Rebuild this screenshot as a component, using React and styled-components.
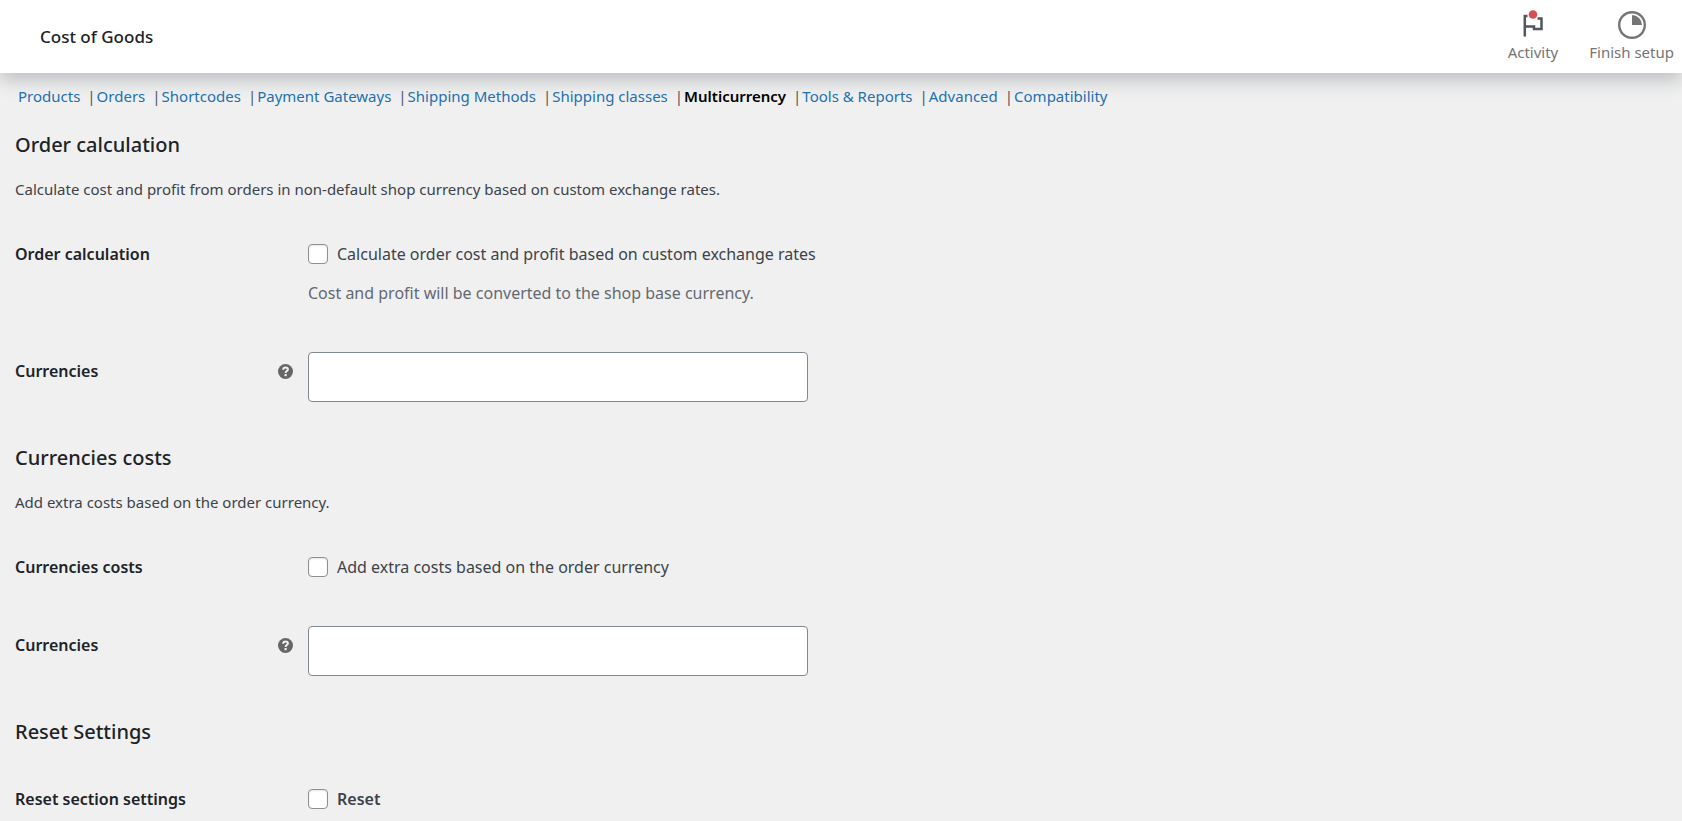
import React, { useState } from "react";
import styled, { createGlobalStyle } from "styled-components";

const GlobalStyle = createGlobalStyle`
  * {
    box-sizing: border-box;
  }

  body {
    margin: 0;
    background-color: #f0f0f0;
    color: #3c434a;
    font-family: "Noto Sans", "Open Sans", sans-serif;
    font-size: 15px;
    line-height: 24px;
  }
`;

const Header = styled.header`
  position: relative;
  display: flex;
  align-items: center;
  justify-content: space-between;
  height: 73px;
  padding: 0 8px 0 40px;
  background-color: #fff;
  box-shadow: 0 8px 16px 0 rgba(85, 93, 102, 0.3);
`;

const PageTitle = styled.h1`
  margin: 0;
  color: #1d2327;
  font-size: 17px;
  font-weight: 500;
`;

const Actions = styled.div`
  display: flex;
  gap: 31px;
`;

const ActionButton = styled.button`
  display: flex;
  flex-direction: column;
  align-items: center;
  padding: 0;
  border: none;
  background: none;
  color: #757575;
  font-family: inherit;
  font-size: 15px;
  line-height: 24px;
  cursor: pointer;

  svg {
    display: block;
  }
`;

const Nav = styled.nav`
  padding: 11px 3px 0;
`;

const NavList = styled.ul`
  display: flex;
  flex-wrap: wrap;
  margin: 0;
  padding: 0;
  list-style: none;
`;

const NavItem = styled.li`
  &:not(:last-child)::after {
    content: "|";
    padding: 0 1px 0 7px;
    color: #50575e;
  }
`;

const NavLink = styled.a`
  color: ${(props) => (props.$current ? "#000" : "#2271b1")};
  font-weight: ${(props) => (props.$current ? 600 : 400)};
  text-decoration: none;
`;

const Page = styled.main`
  padding: 0 15px 10px;
`;

const Section = styled.section`
  margin-top: ${(props) => (props.$first ? "23px" : "42px")};
`;

const SectionTitle = styled.h2`
  margin: 0;
  color: #1d2327;
  font-size: 20px;
  font-weight: 500;
  line-height: 28px;
`;

const SectionText = styled.p`
  margin: 18px 0 0;
`;

const Rows = styled.div`
  display: flex;
  flex-direction: column;
  gap: 47px;
  margin-top: 41px;
`;

const Row = styled.div`
  display: grid;
  grid-template-columns: 278px minmax(0, 1fr);
  column-gap: 15px;
  align-items: start;
`;

const RowHead = styled.div`
  display: flex;
  align-items: center;
  justify-content: space-between;
  padding-top: ${(props) => (props.$field ? "7px" : "0")};
`;

const RowLabel = styled.label`
  color: #1d2327;
  font-size: 16px;
  font-weight: 600;
`;

const HelpButton = styled.button`
  padding: 0;
  border: none;
  background: none;
  cursor: help;

  svg {
    display: block;
  }
`;

const CheckLabel = styled.label`
  display: flex;
  align-items: center;
  gap: 9px;
  width: fit-content;
  font-size: 16px;
  font-weight: ${(props) => (props.$strong ? 600 : 400)};
`;

const Checkbox = styled.input`
  appearance: none;
  flex: none;
  width: 20px;
  height: 20px;
  margin: 0;
  border: 1px solid #8c8f94;
  border-radius: 4px;
  background-color: #fff;
  box-shadow: inset 0 1px 2px rgba(0, 0, 0, 0.1);

  &:checked {
    background-color: #2271b1;
  }
`;

const Hint = styled.p`
  margin: 15px 0 0;
  color: #646970;
  font-size: 16px;
`;

const Field = styled.input`
  display: block;
  width: 100%;
  max-width: 500px;
  height: 50px;
  padding: 0 12px;
  border: 1px solid #7e8993;
  border-radius: 4px;
  background-color: #fff;
  font: inherit;
`;

const links = [
  "Products",
  "Orders",
  "Shortcodes",
  "Payment Gateways",
  "Shipping Methods",
  "Shipping classes",
  "Multicurrency",
  "Tools & Reports",
  "Advanced",
  "Compatibility",
];

const FlagIcon = () => (
  <svg width="28" height="30" viewBox="0 0 28 30" aria-hidden="true">
    <path
      d="M8.5 6H5.8V26.5M5.8 16.5H15V19H22.5V8.5H18.5"
      fill="none"
      stroke="#50575e"
      strokeWidth="2.5"
    />
    <circle cx="14" cy="4.5" r="4.3" fill="#d94f4f" />
  </svg>
);

const SetupIcon = () => (
  <svg width="28" height="30" viewBox="0 0 28 30" aria-hidden="true">
    <circle cx="14" cy="15" r="12.8" fill="none" stroke="#757575" strokeWidth="2.4" />
    <path d="M14 5A10 10 0 0 1 24 15H14Z" fill="#757575" />
  </svg>
);

const HelpIcon = () => (
  <svg width="15" height="15" viewBox="0 0 15 15" aria-hidden="true">
    <circle cx="7.5" cy="7.5" r="7.5" fill="#666" />
    <path
      d="M5.2 5.7C5.2 4.2 6.2 3.5 7.6 3.5C9 3.5 9.9 4.3 9.9 5.4C9.9 7.1 7.6 7 7.6 9"
      fill="none"
      stroke="#f0f0f0"
      strokeWidth="2"
    />
    <rect x="6.5" y="10" width="2.2" height="2.2" fill="#f0f0f0" />
  </svg>
);

function CheckRow({ id, label, text, hint, strong }) {
  const [checked, setChecked] = useState(false);

  return (
    <Row>
      <RowHead>
        <RowLabel htmlFor={id}>{label}</RowLabel>
      </RowHead>
      <div>
        <CheckLabel $strong={strong}>
          <Checkbox
            type="checkbox"
            id={id}
            checked={checked}
            onChange={(e) => setChecked(e.target.checked)}
          />
          {text}
        </CheckLabel>
        {hint && <Hint>{hint}</Hint>}
      </div>
    </Row>
  );
}

function FieldRow({ id, label }) {
  const [value, setValue] = useState("");

  return (
    <Row>
      <RowHead $field>
        <RowLabel htmlFor={id}>{label}</RowLabel>
        <HelpButton type="button" aria-label="Help">
          <HelpIcon />
        </HelpButton>
      </RowHead>
      <Field
        type="text"
        id={id}
        value={value}
        onChange={(e) => setValue(e.target.value)}
      />
    </Row>
  );
}

function App() {
  return (
    <>
      <GlobalStyle />
      <Header>
        <PageTitle>Cost of Goods</PageTitle>
        <Actions>
          <ActionButton type="button">
            <FlagIcon />
            Activity
          </ActionButton>
          <ActionButton type="button">
            <SetupIcon />
            Finish setup
          </ActionButton>
        </Actions>
      </Header>
      <Page>
        <Nav>
          <NavList>
            {links.map((link) => (
              <NavItem key={link}>
                <NavLink href="#" $current={link === "Multicurrency"}>
                  {link}
                </NavLink>
              </NavItem>
            ))}
          </NavList>
        </Nav>

        <Section $first>
          <SectionTitle>Order calculation</SectionTitle>
          <SectionText>
            Calculate cost and profit from orders in non-default shop currency
            based on custom exchange rates.
          </SectionText>
          <Rows>
            <CheckRow
              id="order-calculation"
              label="Order calculation"
              text="Calculate order cost and profit based on custom exchange rates"
              hint="Cost and profit will be converted to the shop base currency."
            />
            <FieldRow id="order-currencies" label="Currencies" />
          </Rows>
        </Section>

        <Section>
          <SectionTitle>Currencies costs</SectionTitle>
          <SectionText>
            Add extra costs based on the order currency.
          </SectionText>
          <Rows>
            <CheckRow
              id="currencies-costs"
              label="Currencies costs"
              text="Add extra costs based on the order currency"
            />
            <FieldRow id="costs-currencies" label="Currencies" />
          </Rows>
        </Section>

        <Section>
          <SectionTitle>Reset Settings</SectionTitle>
          <Rows>
            <CheckRow
              id="reset-section"
              label="Reset section settings"
              text="Reset"
              strong
            />
          </Rows>
        </Section>
      </Page>
    </>
  );
}

export default App;
